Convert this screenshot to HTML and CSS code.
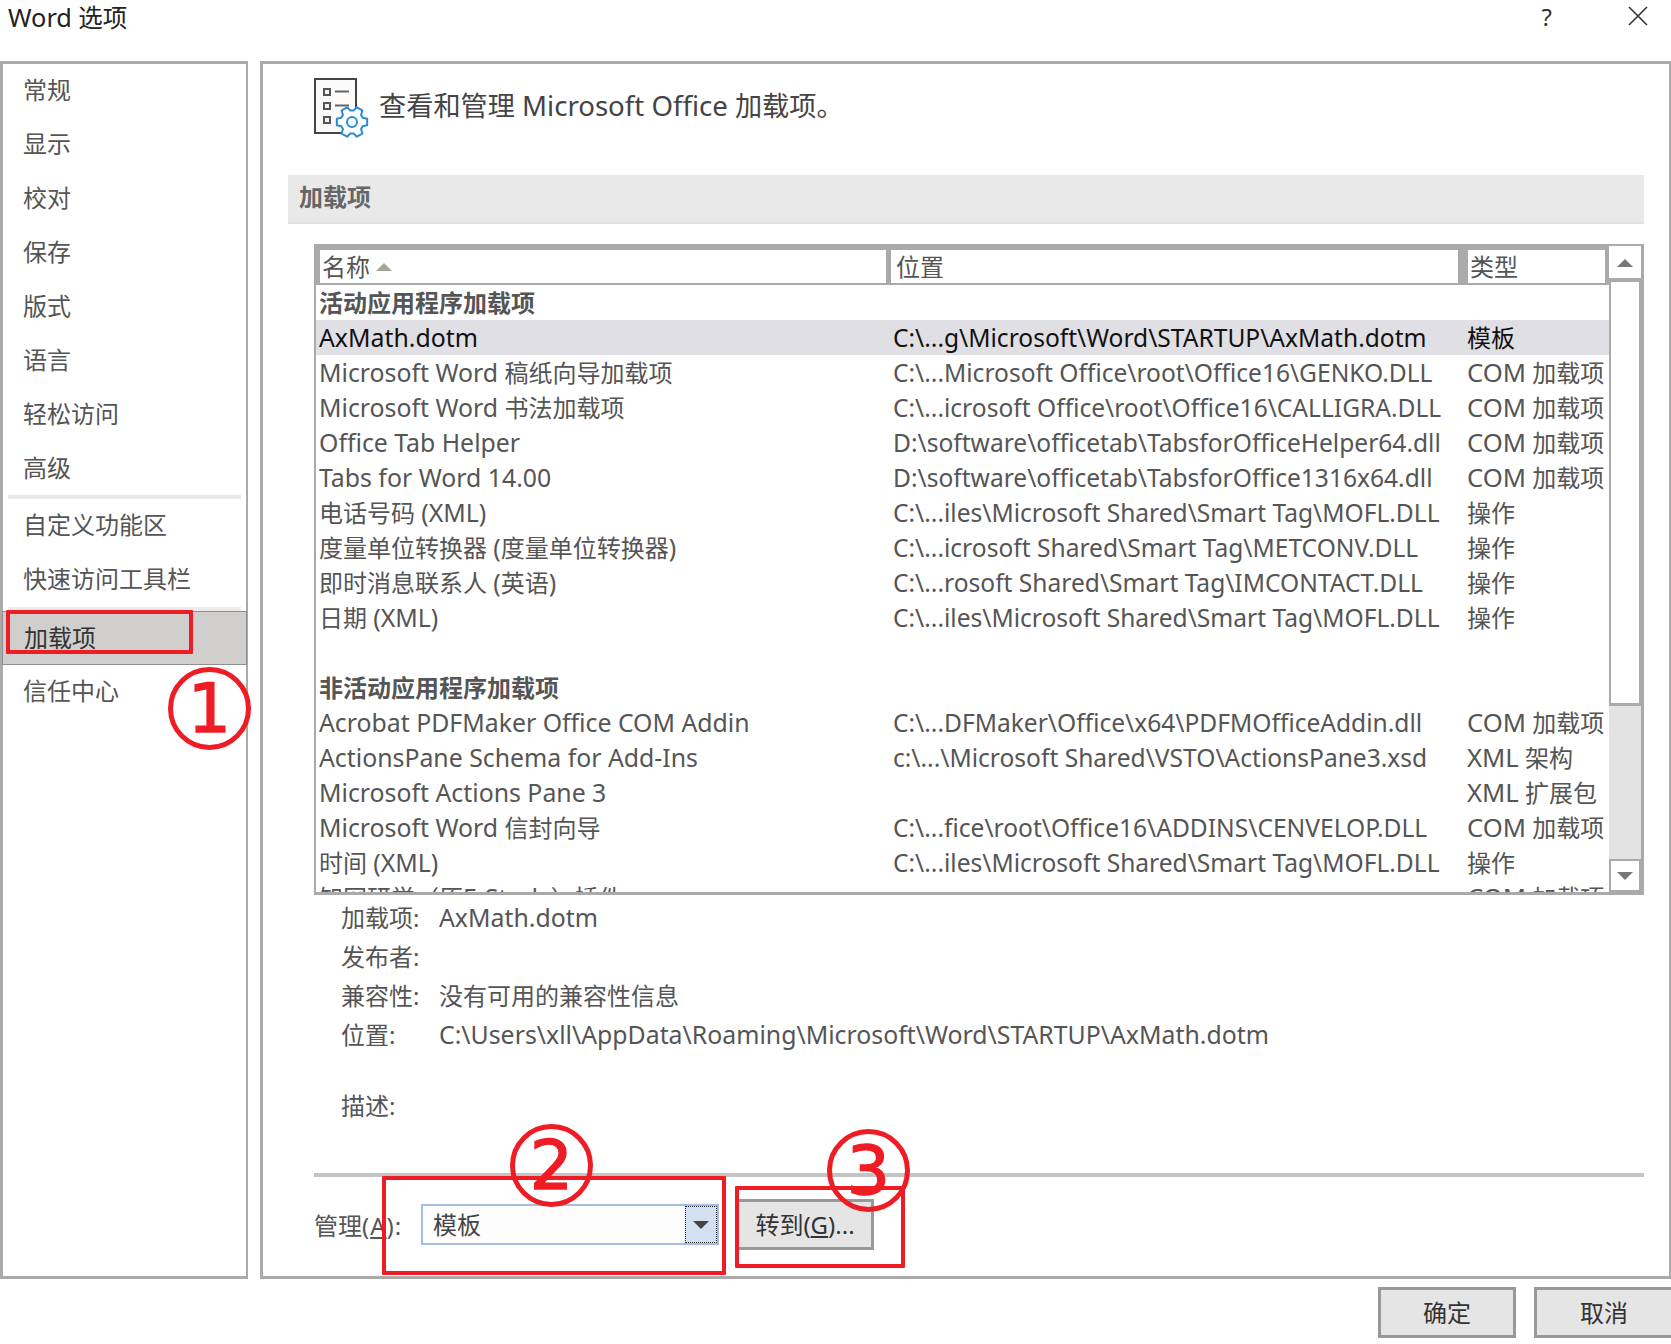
FILE: index.html
```html
<!DOCTYPE html>
<html lang="zh-CN">
<head>
<meta charset="utf-8">
<title>Word 选项</title>
<link rel="stylesheet" href="styles.css">
</head>
<body>
<div class="dialog">
  <header class="titlebar">
    <span class="title"><span class="l">Word</span> 选项</span>
    <div class="winbtns">
      <span class="help">?</span>
      <svg class="close" width="20" height="20" viewBox="0 0 20 20"><path d="M1 1 19 19M19 1 1 19" stroke="#333" stroke-width="1.6" fill="none"/></svg>
    </div>
  </header>
  <div class="content">
    <nav class="sidebar">
      <div class="nav-item">常规</div>
      <div class="nav-item">显示</div>
      <div class="nav-item">校对</div>
      <div class="nav-item">保存</div>
      <div class="nav-item">版式</div>
      <div class="nav-item">语言</div>
      <div class="nav-item">轻松访问</div>
      <div class="nav-item">高级</div>
      <div class="nav-sep"></div>
      <div class="nav-item">自定义功能区</div>
      <div class="nav-item">快速访问工具栏</div>
      <div class="nav-sep2"></div>
      <div class="nav-item selected">加载项</div>
      <div class="nav-item">信任中心</div>
    </nav>
    <main class="main">
      <div class="heading">
        <svg class="heading-icon" width="56" height="60" viewBox="0 0 56 60">
          <path d="M1 1H42V55H1Z" fill="#fbfbfb" stroke="#444" stroke-width="2"/>
          <path d="M10 11h6v6h-6zM10 25h6v6h-6zM10 39h6v6h-6z" fill="#f4f4f4" stroke="#555" stroke-width="2"/>
          <path d="M21 13.500H35M21 27.500H35" stroke="#666" stroke-width="2" fill="none"/>
          <g transform="translate(38 44)">
            <polygon points="10.66,-4.31 15.16,-3.22 15.16,3.22 10.66,4.31 9.06,7.08 10.37,11.52 4.79,14.74 1.6,11.39 -1.6,11.39 -4.79,14.74 -10.37,11.52 -9.06,7.08 -10.66,4.31 -15.16,3.22 -15.16,-3.22 -10.66,-4.31 -9.06,-7.08 -10.37,-11.52 -4.79,-14.74 -1.6,-11.39 1.6,-11.39 4.79,-14.74 10.37,-11.52 9.06,-7.08" fill="#fff" stroke="#2a8dd4" stroke-width="2" stroke-linejoin="round"/>
            <circle r="5" fill="none" stroke="#2a8dd4" stroke-width="2"/>
          </g>
        </svg>
        <h1 class="heading-text">查看和管理 <span class="l">Microsoft Office</span> 加载项。</h1>
      </div>
      <div class="band">加载项</div>
      <div class="listbox">
        <div class="list-main">
          <div class="list-head">
            <div class="hcell hcell-name">名称<span class="sort"></span></div>
            <div class="hcell hcell-loc">位置</div>
            <div class="hcell hcell-type">类型</div>
          </div>
          <div class="rows">
            <div class="row group">活动应用程序加载项</div>
            <div class="row active"><span class="l">AxMath.dotm</span><span class="l">C:\...g\Microsoft\Word\STARTUP\AxMath.dotm</span><span>模板</span></div>
            <div class="row"><span><span class="l">Microsoft Word</span> 稿纸向导加载项</span><span class="l">C:\...Microsoft Office\root\Office16\GENKO.DLL</span><span><span class="l">COM</span> 加载项</span></div>
            <div class="row"><span><span class="l">Microsoft Word</span> 书法加载项</span><span class="l">C:\...icrosoft Office\root\Office16\CALLIGRA.DLL</span><span><span class="l">COM</span> 加载项</span></div>
            <div class="row"><span class="l">Office Tab Helper</span><span class="l">D:\software\officetab\TabsforOfficeHelper64.dll</span><span><span class="l">COM</span> 加载项</span></div>
            <div class="row"><span class="l">Tabs for Word 14.00</span><span class="l">D:\software\officetab\TabsforOffice1316x64.dll</span><span><span class="l">COM</span> 加载项</span></div>
            <div class="row"><span>电话号码 <span class="l">(XML)</span></span><span class="l">C:\...iles\Microsoft Shared\Smart Tag\MOFL.DLL</span><span>操作</span></div>
            <div class="row"><span>度量单位转换器 <span class="l">(</span>度量单位转换器<span class="l">)</span></span><span class="l">C:\...icrosoft Shared\Smart Tag\METCONV.DLL</span><span>操作</span></div>
            <div class="row"><span>即时消息联系人 <span class="l">(</span>英语<span class="l">)</span></span><span class="l">C:\...rosoft Shared\Smart Tag\IMCONTACT.DLL</span><span>操作</span></div>
            <div class="row"><span>日期 <span class="l">(XML)</span></span><span class="l">C:\...iles\Microsoft Shared\Smart Tag\MOFL.DLL</span><span>操作</span></div>
            <div class="row"></div>
            <div class="row group">非活动应用程序加载项</div>
            <div class="row"><span class="l">Acrobat PDFMaker Office COM Addin</span><span class="l">C:\...DFMaker\Office\x64\PDFMOfficeAddin.dll</span><span><span class="l">COM</span> 加载项</span></div>
            <div class="row"><span class="l">ActionsPane Schema for Add-Ins</span><span class="l">c:\...\Microsoft Shared\VSTO\ActionsPane3.xsd</span><span><span class="l">XML</span> 架构</span></div>
            <div class="row"><span class="l">Microsoft Actions Pane 3</span><span></span><span><span class="l">XML</span> 扩展包</span></div>
            <div class="row"><span><span class="l">Microsoft Word</span> 信封向导</span><span class="l">C:\...fice\root\Office16\ADDINS\CENVELOP.DLL</span><span><span class="l">COM</span> 加载项</span></div>
            <div class="row"><span>时间 <span class="l">(XML)</span></span><span class="l">C:\...iles\Microsoft Shared\Smart Tag\MOFL.DLL</span><span>操作</span></div>
            <div class="row"><span>知网研学（原<span class="l">E-Study</span>）插件</span><span></span><span><span class="l">COM</span> 加载项</span></div>
          </div>
        </div>
        <div class="scrollbar">
          <div class="sb-btn sb-up"><span class="tri-up"></span></div>
          <div class="sb-thumb"></div>
          <div class="sb-track"></div>
          <div class="sb-btn sb-down"><span class="tri-down"></span></div>
        </div>
      </div>
      <dl class="details">
        <dt>加载项:</dt><dd class="l">AxMath.dotm</dd>
        <dt>发布者:</dt><dd></dd>
        <dt>兼容性:</dt><dd>没有可用的兼容性信息</dd>
        <dt>位置:</dt><dd class="l">C:\Users\xll\AppData\Roaming\Microsoft\Word\STARTUP\AxMath.dotm</dd>
        <dt class="desc">描述:</dt><dd class="desc"></dd>
      </dl>
      <div class="manage">
        <span class="manage-label">管理<span class="lw">(<u>A</u>):</span></span>
        <div class="select">
          <span class="select-value">模板</span>
          <span class="select-btn"><span class="tri-dark"></span></span>
        </div>
        <button class="btn btn-go">转到(<u>G</u>)...</button>
      </div>
    </main>
  </div>
  <footer class="footer">
    <button class="btn btn-foot">确定</button>
    <button class="btn btn-foot">取消</button>
  </footer>

  <div class="mark rect r1"></div>
  <div class="mark rect r2"></div>
  <div class="mark rect r3"></div>
  <div class="mark num n1">1</div>
  <div class="mark num n2">2</div>
  <div class="mark num n3">3</div>
</div>
</body>
</html>
```
FILE: styles.css
```css
* { box-sizing: border-box; }
html, body { margin: 0; padding: 0; background: #fff; }
body {
  font-family: "Noto Sans", "Noto Sans CJK SC", sans-serif;
  font-size: 24px;
  color: #555;
  overflow: hidden;
}
.l { font-size: 1.035em; }
.lw { letter-spacing: 1px; }
.dialog { position: relative; width: 1671px; height: 1344px; overflow: hidden; }

.titlebar { height: 61px; display: flex; justify-content: space-between; padding: 0 23px 29px 8px; align-items: center; }
.title { color: #222; font-size: 24.5px; }
.winbtns { display: flex; align-items: center; gap: 76px; }
.help { color: #333; font-size: 24px; }

.content { display: flex; gap: 12px; height: 1218px; }
.sidebar { width: 248px; border: 3px solid #aaa; border-right-width: 2px; display: flex; flex-direction: column; }
.nav-item { height: 54px; line-height: 52px; padding-left: 20px; flex: none; }
.nav-sep { height: 4px; margin: -1px 5px 0; background: #e8e8e8; flex: none; }
.nav-sep2 { height: 4px; margin: 0 5px; background: #ebebeb; flex: none; }
.nav-item.selected { background: #d0cfcd; border: 1px solid #8f8f8f; color: #333; margin: 0 -1px; line-height: 52px; padding-left: 21px; }

.main { flex: 1; min-width: 0; border: 3px solid #aaa; border-right-width: 2px; display: flex; flex-direction: column; }
.heading { display: flex; align-items: flex-start; margin: 14px 0 0 51px; height: 97px; gap: 9px; }
.heading-text { margin: 0; font-size: 27.2px; font-weight: 400; color: #444; line-height: 56px; }
.heading-text .l { font-size: 1.014em; }
.band { margin: 0 25px; height: 49px; background: #e9e9e9; border-bottom: 2px solid #e1e1e1; font-weight: 700; color: #666; line-height: 44px; padding-left: 11px; flex: none; }

.listbox { margin: 20px 25px 0 51px; height: 651px; display: flex; flex: none; border: solid #aaa; border-width: 0 3px 3px 2px; }
.list-main { flex: 1; min-width: 0; display: flex; flex-direction: column; overflow: hidden; }
.list-head { height: 41px; flex: none; background: #aaa; padding: 6px 4px 4px 4px; display: grid; grid-template-columns: 566px 567px 1fr; column-gap: 5px; }
.hcell { background: #fff; padding-left: 2px; line-height: 33px; }
.hcell-loc { padding-left: 5px; }
.hcell-type { margin-left: 5px; }
.sort { display: inline-block; margin: 0 0 5px 6px; border: solid transparent; border-width: 0 8px 8px; border-bottom-color: #aaa59a; vertical-align: middle; }
.rows { flex: 1; overflow: hidden; }
.row { height: 35px; line-height: 35px; display: grid; grid-template-columns: 574px 574px 1fr; padding-left: 3px; white-space: nowrap; }
.row > span:nth-child(2).l { font-size: 1.024em; }
.row > span:nth-child(3) .l { font-size: 1.07em; }
.row.group { display: block; font-weight: 700; }
.row.active { background: #e0dfe3; color: #111; }

.scrollbar { width: 32px; flex: none; display: flex; flex-direction: column; border-top: 2px solid #aaa; background: #fff; padding-top: 2px; }
.sb-btn { flex: none; display: flex; align-items: center; justify-content: center; }
.sb-up { height: 34px; border-bottom: 4px solid #aaa; }
.sb-thumb { height: 424px; border: solid #aaa; border-width: 0 2px 3px; }
.sb-track { flex: 1; background: #e3e3e3; }
.sb-down { height: 33px; border: 2px solid #aaa; }
.tri-up { border: solid transparent; border-width: 0 8px 8px; border-bottom-color: #777; }
.tri-down { border: solid transparent; border-width: 8px 8px 0; border-top-color: #777; }

.details { margin: 3px 0 0 78px; display: grid; grid-template-columns: 98px 1fr; grid-auto-rows: 39px; line-height: 39px; flex: none; }
.details dt, .details dd { margin: 0; }
.details .desc { margin-top: 32px; }

.manage { margin: 80px 25px 0 51px; padding-top: 22px; display: flex; align-items: center; border-top: 4px solid #c4c4c4; flex: none; }
.manage-label { width: 107px; flex: none; }
.select { width: 298px; height: 41px; border: 2px solid #a4bde0; display: flex; flex: none; background: #fdfdfd; }
.select-value { flex: 1; padding-left: 10px; line-height: 37px; color: #444; }
.select-btn { width: 32px; background: #d3e0f2; border: 1px dotted #222; display: flex; align-items: center; justify-content: center; }
.tri-dark { border: solid transparent; border-width: 8px 8px 0; border-top-color: #444; }

.btn { font: inherit; color: #333; background: #e5e5e5; border: 3px solid #999; border-radius: 0; padding: 0; height: 51px; width: 138px; line-height: 45px; }
.btn-go { margin-left: 17px; }
.footer { display: flex; justify-content: flex-end; gap: 18px; padding-top: 8px; }
.btn-foot:last-child { border-right: 0; width: 137px; }

.mark { position: absolute; }
.rect { border: 4px solid #ee1c25; border-radius: 1px; }
.r1 { left: 6px; top: 610px; width: 187px; height: 44px; }
.r2 { left: 382px; top: 1176px; width: 344px; height: 99px; }
.r3 { left: 735px; top: 1186px; width: 170px; height: 82px; }
.num { width: 83px; height: 83px; border: 5px solid #ee1c25; border-radius: 50%; color: #ee1c25; font-family: "DejaVu Sans", sans-serif; font-size: 68px; line-height: 73px; text-align: center; -webkit-text-stroke: 1.5px #ee1c25; }
.n1 { left: 168px; top: 667px; }
.n2 { left: 510px; top: 1124px; }
.n3 { left: 827px; top: 1129px; }
```
